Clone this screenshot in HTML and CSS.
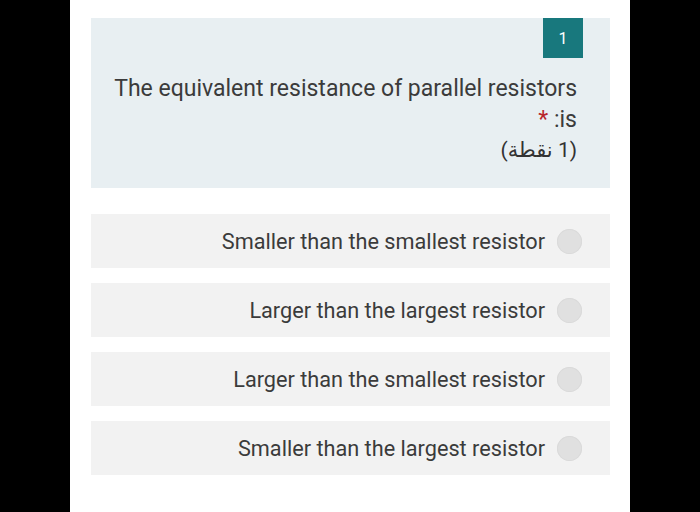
FILE: index.html
```html
<!DOCTYPE html>
<html lang="en">
<head>
<meta charset="utf-8">
<title>Question 1</title>
<link rel="stylesheet" href="styles.css">
</head>
<body>
<main class="page">
  <section class="question">
    <div class="badge-row"><span class="badge">1</span></div>
    <div class="qtext">
      <div class="line">The equivalent resistance of parallel resistors</div>
      <div class="line" dir="rtl">is: <span class="req">*</span></div>
      <div class="line points" dir="rtl">(1 نقطة)</div>
    </div>
  </section>
  <ul class="options">
    <li class="option"><span class="label">Smaller than the smallest resistor</span><span class="radio"></span></li>
    <li class="option"><span class="label">Larger than the largest resistor</span><span class="radio"></span></li>
    <li class="option"><span class="label">Larger than the smallest resistor</span><span class="radio"></span></li>
    <li class="option"><span class="label">Smaller than the largest resistor</span><span class="radio"></span></li>
  </ul>
</main>
</body>
</html>
```
FILE: styles.css
```css
html, body {
  margin: 0;
  padding: 0;
  background: #000;
  height: 100%;
}
body {
  font-family: Roboto, "DejaVu Sans", sans-serif;
  color: #3b3b3b;
}
.page {
  width: 560px;
  height: 512px;
  margin-left: 70px;
  background: #fff;
  padding: 18px 20px 0 21px;
  box-sizing: border-box;
}
.question {
  background: #e8eff2;
  height: 170px;
  box-sizing: border-box;
  padding: 0 33px 0 12px;
}
.badge-row {
  display: flex;
  justify-content: flex-end;
  margin-right: -6px;
}
.badge {
  width: 40px;
  height: 40px;
  background: #18787d;
  color: #fff;
  font-size: 16px;
  display: flex;
  align-items: center;
  justify-content: center;
}
.qtext {
  margin-top: 15px;
  text-align: right;
  font-size: 23px;
  line-height: 31px;
  white-space: nowrap;
}
.req {
  color: #b8262b;
}
.points {
  font-size: 21px;
  color: #333;
}
.options {
  list-style: none;
  margin: 26px 0 0;
  padding: 0;
  display: flex;
  flex-direction: column;
  gap: 15px;
}
.option {
  height: 54px;
  background: #f2f2f2;
  display: flex;
  align-items: center;
  justify-content: flex-end;
  gap: 12px;
  padding-right: 28px;
  font-size: 21.7px;
}
.radio {
  width: 25px;
  height: 25px;
  border-radius: 50%;
  background: #e0e0e0;
  box-shadow: inset 0 0 0 1px #dadada;
}
```
